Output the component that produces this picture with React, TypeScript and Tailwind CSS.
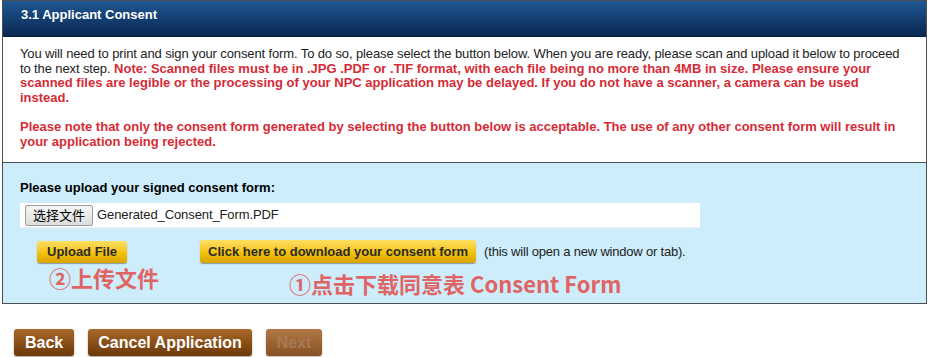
import React from "react";

const font = { fontFamily: '"Liberation Sans", Arial, "Noto Sans CJK SC", sans-serif' };
const cjk = { fontFamily: '"Noto Sans CJK SC", "Noto Sans", sans-serif' };

export default function App() {
  return (
    <div className="w-[929px] h-[357px] bg-white overflow-hidden" style={font}>
      <div className="mx-[2px] border border-[#4a4f55]">
        <div className="h-[36px] bg-gradient-to-b from-[#1f5793] via-[#143f72] to-[#0a2750] px-[18px] pt-[1px] border-b border-[#0a1f3d]">
          <span className="text-white font-bold text-[13px]">3.1 Applicant Consent</span>
        </div>
        <div className="bg-white px-[17px] pt-[10px] pb-[13px] text-[13px] leading-[14.5px] text-[#222] border-b border-[#4a4f55]">
          <p>
            <span className="tracking-[-0.12px]">
              You will need to print and sign your consent form. To do so, please select the button below. When you are ready, please scan and upload it below to proceed to the next step.
            </span>{" "}
            <span className="font-bold text-[#d62b36]">
              Note: Scanned files must be in .JPG .PDF or .TIF format, with each file being no more than 4MB in size. Please ensure your scanned files are legible or the processing of your NPC application may be delayed. If you do not have a scanner, a camera can be used instead.
            </span>
          </p>
          <p className="mt-[15px] font-bold text-[#d62b36]">
            Please note that only the consent form generated by selecting the button below is acceptable. The use of any other consent form will result in your application being rejected.
          </p>
        </div>
        <div className="bg-[#cdedfb] pl-[17px] pt-[17px] pb-[6px] h-[140px]">
          <div className="font-bold text-[13px] text-black leading-[15px]">Please upload your signed consent form:</div>
          <div className="mt-[8px] flex items-center w-[680px] h-[25px] bg-white pl-[5px] border-b border-[#e6f2f8]">
            <button className="h-[21px] px-[7px] bg-gradient-to-b from-[#f7f7f7] to-[#dcdcdc] border border-[#9a9a9a] rounded-[2px] text-[13px] text-black leading-none">
              选择文件
            </button>
            <span className="ml-[4px] text-[13px] text-[#222] tracking-[-0.1px]">Generated_Consent_Form.PDF</span>
          </div>
          <div className="mt-[12px] flex items-center">
            <button className="ml-[17px] h-[22px] px-[10px] rounded-[3px] bg-gradient-to-b from-[#fde060] via-[#f5c40d] to-[#d9a400] shadow-[0_1px_1px_rgba(0,0,0,0.35)] text-[13px] font-bold text-[#2a2a2a]">
              Upload File
            </button>
            <button className="ml-[73px] h-[23px] px-[8px] rounded-[3px] bg-gradient-to-b from-[#fde060] via-[#f5c40d] to-[#d9a400] shadow-[0_1px_1px_rgba(0,0,0,0.35)] text-[13px] font-bold text-[#2a2a2a]">
              Click here to download your consent form
            </button>
            <span className="ml-[8px] text-[13px] text-[#222] tracking-[-0.2px]">(this will open a new window or tab).</span>
          </div>
          <div className="flex items-start" style={cjk}>
            <div className="ml-[29px] mt-[1px] text-[22px] font-bold text-[#e06464] leading-[26px]">②上传文件</div>
            <div className="ml-[130px] mt-[7px] text-[22px] font-bold text-[#e06464] leading-[26px]">①点击下载同意表 Consent Form</div>
          </div>
        </div>
      </div>
      <div className="mt-[25px] ml-[14px] flex gap-[14px]">
        <button className="h-[27px] px-[11px] rounded-[3px] bg-gradient-to-b from-[#a86a2c] via-[#8a4f17] to-[#6c390b] shadow-[0_1px_2px_rgba(0,0,0,0.4)] text-white font-bold text-[16px]">
          Back
        </button>
        <button className="h-[27px] px-[10px] rounded-[3px] bg-gradient-to-b from-[#a86a2c] via-[#8a4f17] to-[#6c390b] shadow-[0_1px_2px_rgba(0,0,0,0.4)] text-white font-bold text-[16px]">
          Cancel Application
        </button>
        <button className="h-[27px] px-[11px] rounded-[3px] bg-gradient-to-b from-[#b27a48] via-[#9c6333] to-[#875226] shadow-[0_1px_2px_rgba(0,0,0,0.3)] text-[#a77a55] font-bold text-[16px]">
          Next
        </button>
      </div>
    </div>
  );
}
